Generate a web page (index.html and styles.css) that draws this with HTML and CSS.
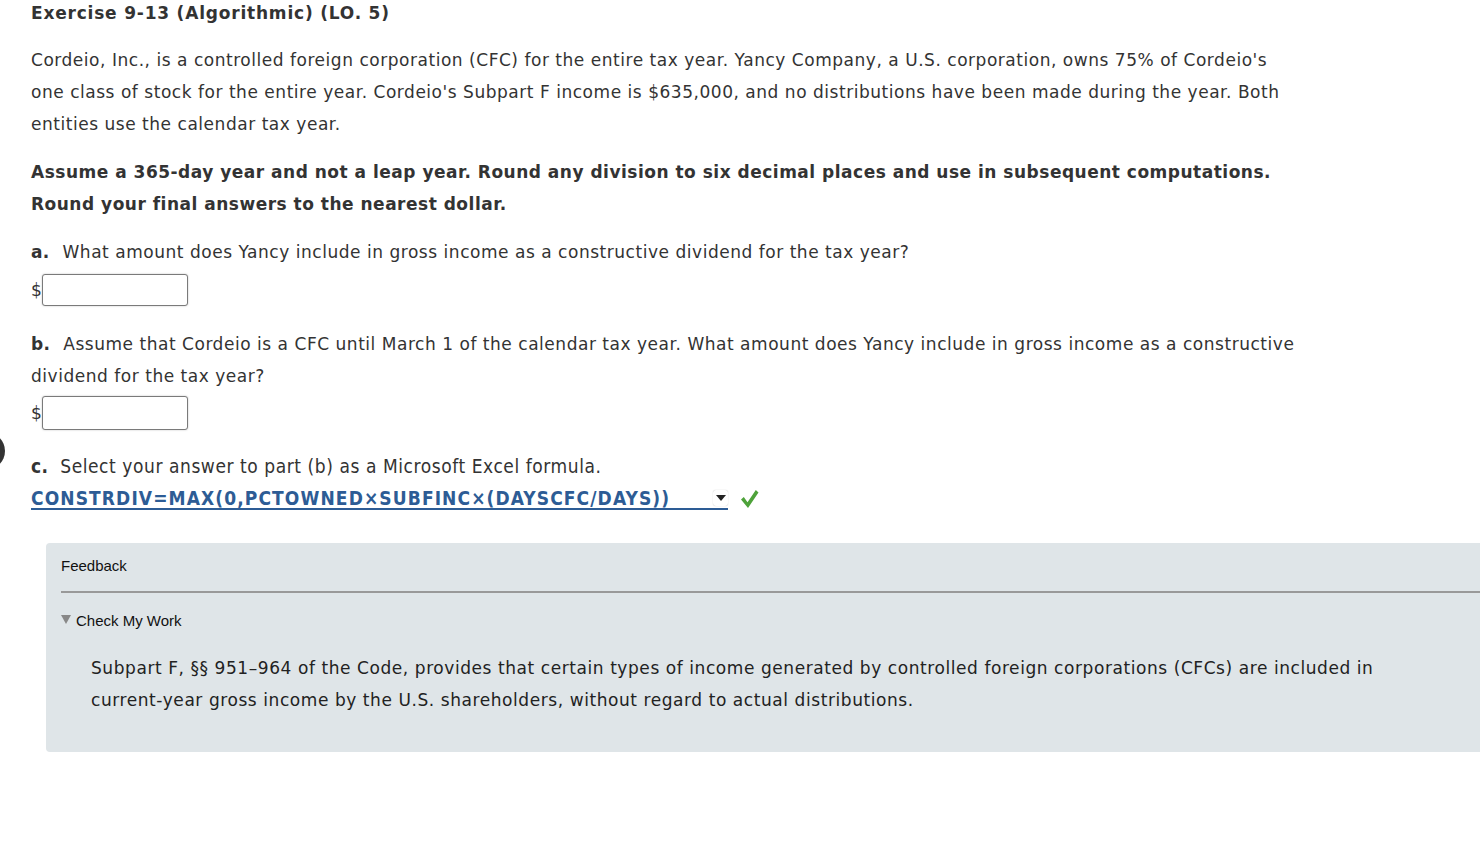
FILE: index.html
```html
<!DOCTYPE html>
<html>
<head>
<meta charset="utf-8">
<link rel="stylesheet" href="styles.css">
</head>
<body>
<div class="edge-dot"></div>
<div class="page">
  <h1 class="title">Exercise 9-13 (Algorithmic) (LO. 5)</h1>
  <p class="para">Cordeio, Inc., is a controlled foreign corporation (CFC) for the entire tax year. Yancy Company, a U.S. corporation, owns 75% of Cordeio's one class of stock for the entire year. Cordeio's Subpart F income is $635,000, and no distributions have been made during the year. Both entities use the calendar tax year.</p>
  <p class="para bold">Assume a 365-day year and not a leap year. Round any division to six decimal places and use in subsequent computations. Round your final answers to the nearest dollar.</p>
  <p class="para q-a"><b class="lbl">a.</b>What amount does Yancy include in gross income as a constructive dividend for the tax year?</p>
  <div class="answer"><span class="dollar">$</span><span class="box"></span></div>
  <p class="para q-b"><b class="lbl">b.</b>Assume that Cordeio is a CFC until March 1 of the calendar tax year. What amount does Yancy include in gross income as a constructive dividend for the tax year?</p>
  <div class="answer"><span class="dollar">$</span><span class="box"></span></div>
  <p class="para q-c"><b class="lbl">c.</b>Select your answer to part (b) as a Microsoft Excel formula.</p>
  <div class="select-row">
    <div class="select">
      <span class="select-text">CONSTRDIV=MAX(0,PCTOWNED×SUBFINC×(DAYSCFC/DAYS))</span>
      <span class="arrow-box"><svg width="10" height="6" viewBox="0 0 10 6"><path d="M0 0 L10 0 L5 6 Z" fill="#222"/></svg></span>
    </div>
    <svg class="check" width="19" height="20" viewBox="0 0 19 20"><path d="M1 10.5 L3.8 8 L7.5 13.2 L15.8 1 L18.5 3.4 L8 19 Z" fill="#4ea23a"/></svg>
  </div>
  <div class="feedback">
    <div class="fb-head">Feedback</div>
    <div class="fb-rule"></div>
    <div class="fb-toggle"><span class="tri"></span>Check My Work</div>
    <p class="fb-text">Subpart F, §§ 951–964 of the Code, provides that certain types of income generated by controlled foreign corporations (CFCs) are included in current-year gross income by the U.S. shareholders, without regard to actual distributions.</p>
  </div>
</div>
</body>
</html>
```
FILE: styles.css
```css
html, body {
  margin: 0;
  padding: 0;
  background: #fff;
  overflow: hidden;
}
body {
  font-family: "DejaVu Sans", Verdana, sans-serif;
  color: #333;
  font-size: 17px;
}
.edge-dot {
  position: absolute;
  left: -33px;
  top: 432px;
  width: 38px;
  height: 38px;
  border-radius: 50%;
  background: #333;
}
.page {
  padding-left: 31px;
}
.title {
  margin: 0;
  font-size: 17px;
  font-weight: bold;
  line-height: 26px;
  letter-spacing: 0.8px;
}
.para {
  margin: 18px 0 0 0;
  line-height: 32px;
  max-width: 1268px;
  letter-spacing: 0.53px;
}
.lbl {
  letter-spacing: 0.3px;
  margin-right: 13px;
}
.para.bold {
  font-weight: bold;
  margin-top: 16px;
  letter-spacing: 0.5px;
}
.q-a { margin-top: 16px; }
.q-b { margin-top: 22px; }
.q-c {
  margin-top: 20px;
  font-family: "DejaVu Sans Condensed", "DejaVu Sans", sans-serif;
  font-size: 19px;
  letter-spacing: 0.56px;
}
.q-c .lbl { margin-right: 12px; }
.answer {
  display: flex;
  align-items: center;
  height: 32px;
  margin-top: 6px;
}
.q-b + .answer { margin-top: 4px; height: 34px; }
.dollar {
  width: 11px;
  font-size: 17px;
}
.box {
  box-sizing: border-box;
  width: 146px;
  height: 100%;
  border: 1.5px solid #7a7a7a;
  border-radius: 3px;
  box-shadow: 0 0 2px rgba(0,0,0,0.25);
  background: #fff;
}
.select-row {
  display: flex;
  align-items: center;
  margin-top: 6px;
  height: 22px;
}
.select {
  display: flex;
  align-items: center;
  justify-content: space-between;
  width: 697px;
  height: 22px;
  box-sizing: border-box;
  border-bottom: 2px solid #2d5c95;
}
.select-text {
  font-family: "DejaVu Sans Condensed", "DejaVu Sans", sans-serif;
  font-weight: bold;
  font-size: 19px;
  color: #2d5c95;
  letter-spacing: 1.1px;
  white-space: nowrap;
}
.arrow-box {
  display: flex;
  align-items: center;
  justify-content: center;
  width: 15px;
  height: 16px;
  border-radius: 3px;
  background: #fff;
  box-shadow: 0 0 1px rgba(0,0,0,0.3);
}
.check {
  margin-left: 12px;
}
.feedback {
  margin: 33px 0 0 15px;
  background: #dfe5e8;
  border-radius: 4px 0 0 4px;
  height: 209px;
  font-family: "Liberation Sans", Arial, sans-serif;
  color: #111;
  padding-left: 15px;
  box-sizing: border-box;
}
.fb-head {
  font-size: 15px;
  padding-top: 14px;
  line-height: 18px;
}
.fb-rule {
  height: 2px;
  background: #999;
  margin-top: 16px;
}
.fb-toggle {
  font-size: 15px;
  line-height: 18px;
  margin-top: 19px;
  display: flex;
  align-items: center;
}
.tri {
  width: 0;
  height: 0;
  border-left: 5px solid transparent;
  border-right: 5px solid transparent;
  border-top: 9px solid #888;
  margin-right: 5px;
  margin-top: -3px;
}
.fb-text {
  font-family: "DejaVu Sans", Verdana, sans-serif;
  font-size: 17px;
  color: #222;
  line-height: 32px;
  margin: 22px 0 0 30px;
  max-width: 1300px;
  letter-spacing: 0.57px;
}
```
